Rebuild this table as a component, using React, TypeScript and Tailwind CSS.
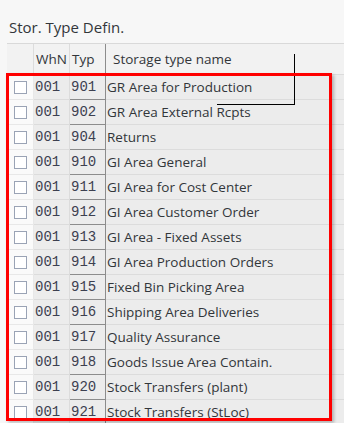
import React from "react";

const rows: [string, string, string][] = [
  ["001", "901", "GR Area for Production"],
  ["001", "902", "GR Area External Rcpts"],
  ["001", "904", "Returns"],
  ["001", "910", "GI Area General"],
  ["001", "911", "GI Area for Cost Center"],
  ["001", "912", "GI Area Customer Order"],
  ["001", "913", "GI Area - Fixed Assets"],
  ["001", "914", "GI Area Production Orders"],
  ["001", "915", "Fixed Bin Picking Area"],
  ["001", "916", "Shipping Area Deliveries"],
  ["001", "917", "Quality Assurance"],
  ["001", "918", "Goods Issue Area Contain."],
  ["001", "920", "Stock Transfers (plant)"],
  ["001", "921", "Stock Transfers (StLoc)"],
];

const sans = "font-['Open_Sans','Liberation_Sans',Arial,sans-serif]";
const mono = "font-['Liberation_Mono','Courier_New',monospace]";

function Row({ whn, typ, name }: { whn: string; typ: string; name: string }) {
  return (
    <div className="flex h-[25px] text-[#32363a]">
      <div className="flex w-[27px] items-center justify-center border-b border-r border-[#e8e8e8] bg-[#fafafa]">
        <div className="h-[13px] w-[13px] border border-[#9aa3b5] bg-white" />
      </div>
      <div className={`flex w-[36px] items-center border-b border-r border-[#dcdcdc] bg-[#ececec] pl-[1px] text-[14px] text-[#3c4050] ${mono}`}>
        {whn}
      </div>
      <div className={`flex w-[36px] items-center border-b border-r border-[#8c8c8c] bg-[#ececec] pl-[1px] text-[14px] text-[#3c4050] ${mono}`}>
        {typ}
      </div>
      <div className={`flex flex-1 items-center whitespace-nowrap border-b border-[#dcdcdc] bg-[#ececec] pl-[1px] text-[13.5px] ${sans}`}>
        {name}
      </div>
    </div>
  );
}

export default function App() {
  return (
    <div className={`relative h-[423px] w-[344px] overflow-hidden bg-[#f7f7f7] ${sans}`}>
      <div className="h-[43px] pl-[9px] pt-[17px] text-[15px] leading-[20px] text-[#32363a]">Stor. Type Defin.</div>

      <div className="ml-[7px] border-t border-[#d9d9d9]">
        {/* header */}
        <div className="flex h-[31px] bg-[#f2f2f2] text-[13.5px] text-[#32363a]">
          <div className="w-[27px] border-b border-r border-[#dcdcdc]" />
          <div className="flex w-[36px] items-center border-b border-r border-[#dcdcdc] pl-[2px]">WhN</div>
          <div className="flex w-[36px] items-center border-b border-r border-[#8c8c8c] pl-[2px]">Typ</div>
          <div className="flex flex-1 items-center border-b border-[#dcdcdc] pl-[7px]">Storage type name</div>
        </div>
        {rows.map(([w, t, n]) => (
          <Row key={t} whn={w} typ={t} name={n} />
        ))}
      </div>

      {/* callout lines */}
      <div className="absolute left-[217px] top-[54px] h-[51px] w-[78px] border-b border-r border-black" />
      {/* highlight frame */}
      <div className="absolute left-[6px] top-[73px] h-[348px] w-[326px] border-[3px] border-[#ff0000] shadow-[2px_2px_3px_rgba(0,0,0,0.25)]" />
    </div>
  );
}
